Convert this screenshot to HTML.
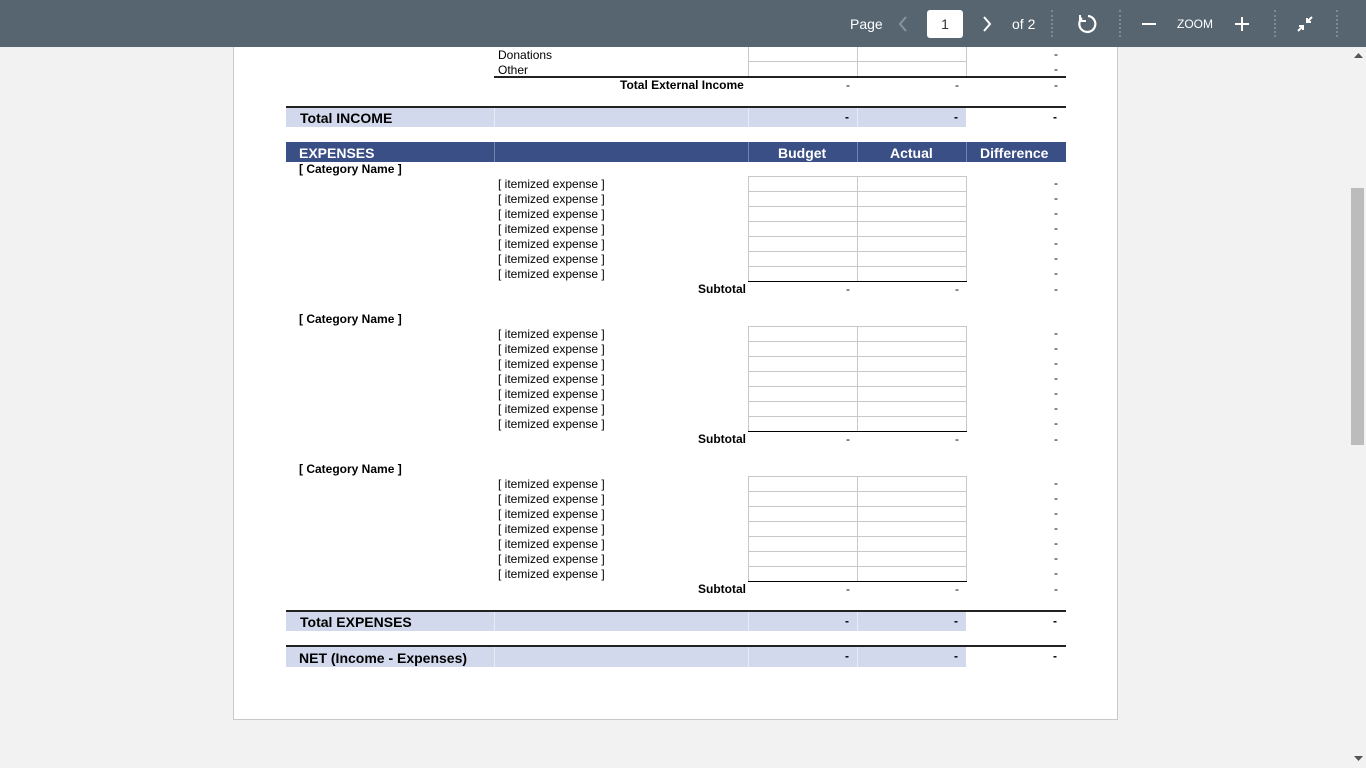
<!DOCTYPE html>
<html><head><meta charset="utf-8"><style>
*{margin:0;padding:0;box-sizing:border-box}
body{width:1366px;height:768px;overflow:hidden;background:#f2f2f2;font-family:"Liberation Sans",Arial,sans-serif;position:relative;color:#000}
.tb{position:absolute;left:0;top:0;width:1366px;height:47px;background:#566570;color:#fff;font-size:14px}
.tb *{position:absolute}
.sep{top:10px;width:0;height:27px;border-left:2px dotted #7d8a94}
.page{position:absolute;left:233px;top:47px;width:885px;height:673px;background:#fff;border:1px solid #c9c9c9;border-top:none}
.t{position:absolute;font-size:12px;line-height:15px;white-space:nowrap;margin-top:1px}
.bx{position:absolute;height:15px;border:1px solid #c8c8c8;border-top:none;border-left:1px solid #c8c8c8}
.bb{font-weight:bold}
.d{position:absolute;left:1054px;font-size:12px;line-height:15px}
.db{position:absolute;font-size:12px;line-height:15px}
.band{position:absolute;left:286px;width:680px;background:#d2d9ec;height:19px}
.ln{position:absolute;height:2px;background:#222}
</style></head><body>
<div class="tb">
<span style="left:850px;top:16px">Page</span>
<svg style="left:896px;top:15px" width="14" height="18"><path d="M10 2L4 9l6 7" stroke="#8593a0" stroke-width="2" fill="none"/></svg>
<div style="left:927px;top:10px;width:36px;height:28px;background:#fff;border-radius:3px;color:#333;text-align:center;line-height:28px">1</div>
<svg style="left:980px;top:15px" width="14" height="18"><path d="M4 2l6 7-6 7" stroke="#fff" stroke-width="2" fill="none"/></svg>
<span style="left:1012px;top:16px">of 2</span>
<div class="sep" style="left:1051px"></div>
<svg style="left:1076px;top:13px" width="22" height="22"><path d="M6 5A8 8 0 1 0 12 3" stroke="#fff" stroke-width="2.2" fill="none"/><path d="M4 2v6h6" stroke="#fff" stroke-width="2" fill="none"/></svg>
<div class="sep" style="left:1119px"></div>
<div style="left:1142px;top:23px;width:14px;height:2px;background:#fff"></div>
<span style="left:1177px;top:17px;font-size:12px">ZOOM</span>
<div style="left:1235px;top:23px;width:14px;height:2px;background:#fff"></div>
<div style="left:1241px;top:17px;width:2px;height:14px;background:#fff"></div>
<div class="sep" style="left:1274px"></div>
<svg style="left:1296px;top:15px" width="18" height="18"><path d="M2 16l5-5M3 11h4v4M16 2l-5 5M11 3v4h4" stroke="#fff" stroke-width="2" fill="none"/></svg>
<div class="sep" style="left:1336px"></div>
</div>
<svg style="position:absolute;left:1354px;top:53px" width="9" height="6"><path d="M0 5L4.5 0 9 5z" fill="#555"/></svg>
<svg style="position:absolute;left:1354px;top:756px" width="9" height="6"><path d="M0 0L4.5 5 9 0z" fill="#555"/></svg>
<div style="position:absolute;left:1351px;top:188px;width:13px;height:257px;background:#bcbcbc"></div>
<div class="page"></div>

<div class="bx" style="left:748px;top:47px;width:110px"></div><div class="bx" style="left:857px;top:47px;width:110px"></div>
<div class="bx" style="left:748px;top:62px;width:110px"></div><div class="bx" style="left:857px;top:62px;width:110px"></div>
<div class="t" style="left:498px;top:47px">Donations</div><span class="d" style="top:47px">-</span>
<div class="t" style="left:498px;top:62px">Other</div><span class="d" style="top:62px">-</span>
<div class="ln" style="left:494px;top:76px;width:572px"></div>
<div class="t bb" style="left:620px;top:77px">Total External Income</div>
<span class="db" style="left:846px;top:78px">-</span><span class="db" style="left:955px;top:78px">-</span><span class="d" style="top:78px">-</span>

<div class="ln" style="left:286px;top:106px;width:780px"></div>
<div class="band" style="top:108px"></div>
<div style="position:absolute;left:494px;top:108px;width:1px;height:19px;background:#e8ecf5"></div>
<div style="position:absolute;left:748px;top:108px;width:1px;height:19px;background:#e8ecf5"></div>
<div style="position:absolute;left:857px;top:108px;width:1px;height:19px;background:#e8ecf5"></div>
<div class="t bb" style="left:300px;top:109px;font-size:14px;line-height:17px">Total INCOME</div>
<span class="db bb" style="left:845px;top:110px">-</span><span class="db bb" style="left:954px;top:110px">-</span><span class="db bb" style="left:1053px;top:110px">-</span>

<div style="position:absolute;left:286px;top:142px;width:780px;height:20px;background:#3b4f87"></div>
<div style="position:absolute;left:494px;top:142px;width:1px;height:20px;background:#7283b0"></div>
<div style="position:absolute;left:748px;top:142px;width:1px;height:20px;background:#7283b0"></div>
<div style="position:absolute;left:857px;top:142px;width:1px;height:20px;background:#7283b0"></div>
<div style="position:absolute;left:966px;top:142px;width:1px;height:20px;background:#7283b0"></div>
<div class="t bb" style="left:299px;top:143px;font-size:14px;line-height:18px;color:#fff">EXPENSES</div>
<div class="t bb" style="left:778px;top:143px;font-size:14px;line-height:18px;color:#fff">Budget</div>
<div class="t bb" style="left:890px;top:143px;font-size:14px;line-height:18px;color:#fff">Actual</div>
<div class="t bb" style="left:980px;top:143px;font-size:14px;line-height:18px;color:#fff">Difference</div>

<div class="t bb" style="left:299px;top:161px">[ Category Name ]</div>
<div class="t" style="left:498px;top:176px">[ itemized expense ]</div>
<div class="t" style="left:498px;top:191px">[ itemized expense ]</div>
<div class="t" style="left:498px;top:206px">[ itemized expense ]</div>
<div class="t" style="left:498px;top:221px">[ itemized expense ]</div>
<div class="t" style="left:498px;top:236px">[ itemized expense ]</div>
<div class="t" style="left:498px;top:251px">[ itemized expense ]</div>
<div class="t" style="left:498px;top:266px">[ itemized expense ]</div>
<div style="position:absolute;left:748px;top:176px;width:219px;height:106px;border:1px solid #c8c8c8;background:repeating-linear-gradient(#fff 0 14px,#c8c8c8 14px 15px)"></div>
<div style="position:absolute;left:857px;top:176px;width:1px;height:106px;background:#c8c8c8"></div>
<div class="ln" style="left:748px;top:281px;width:219px;height:1px;background:#000"></div>
<div class="t bb" style="left:698px;top:281px">Subtotal</div>
<span class="db" style="left:846px;top:282px">-</span><span class="db" style="left:955px;top:282px">-</span>

<div class="t bb" style="left:299px;top:311px">[ Category Name ]</div>
<div class="t" style="left:498px;top:326px">[ itemized expense ]</div>
<div class="t" style="left:498px;top:341px">[ itemized expense ]</div>
<div class="t" style="left:498px;top:356px">[ itemized expense ]</div>
<div class="t" style="left:498px;top:371px">[ itemized expense ]</div>
<div class="t" style="left:498px;top:386px">[ itemized expense ]</div>
<div class="t" style="left:498px;top:401px">[ itemized expense ]</div>
<div class="t" style="left:498px;top:416px">[ itemized expense ]</div>
<div style="position:absolute;left:748px;top:326px;width:219px;height:106px;border:1px solid #c8c8c8;background:repeating-linear-gradient(#fff 0 14px,#c8c8c8 14px 15px)"></div>
<div style="position:absolute;left:857px;top:326px;width:1px;height:106px;background:#c8c8c8"></div>
<div class="ln" style="left:748px;top:431px;width:219px;height:1px;background:#000"></div>
<div class="t bb" style="left:698px;top:431px">Subtotal</div>
<span class="db" style="left:846px;top:432px">-</span><span class="db" style="left:955px;top:432px">-</span>

<div class="t bb" style="left:299px;top:461px">[ Category Name ]</div>
<div class="t" style="left:498px;top:476px">[ itemized expense ]</div>
<div class="t" style="left:498px;top:491px">[ itemized expense ]</div>
<div class="t" style="left:498px;top:506px">[ itemized expense ]</div>
<div class="t" style="left:498px;top:521px">[ itemized expense ]</div>
<div class="t" style="left:498px;top:536px">[ itemized expense ]</div>
<div class="t" style="left:498px;top:551px">[ itemized expense ]</div>
<div class="t" style="left:498px;top:566px">[ itemized expense ]</div>
<div style="position:absolute;left:748px;top:476px;width:219px;height:106px;border:1px solid #c8c8c8;background:repeating-linear-gradient(#fff 0 14px,#c8c8c8 14px 15px)"></div>
<div style="position:absolute;left:857px;top:476px;width:1px;height:106px;background:#c8c8c8"></div>
<div class="ln" style="left:748px;top:581px;width:219px;height:1px;background:#000"></div>
<div class="t bb" style="left:698px;top:581px">Subtotal</div>
<span class="db" style="left:846px;top:582px">-</span><span class="db" style="left:955px;top:582px">-</span>

<span class="d" style="top:176px">-</span><span class="d" style="top:191px">-</span><span class="d" style="top:206px">-</span><span class="d" style="top:221px">-</span><span class="d" style="top:236px">-</span><span class="d" style="top:251px">-</span><span class="d" style="top:266px">-</span><span class="d" style="top:282px">-</span>
<span class="d" style="top:326px">-</span><span class="d" style="top:341px">-</span><span class="d" style="top:356px">-</span><span class="d" style="top:371px">-</span><span class="d" style="top:386px">-</span><span class="d" style="top:401px">-</span><span class="d" style="top:416px">-</span><span class="d" style="top:432px">-</span>
<span class="d" style="top:476px">-</span><span class="d" style="top:491px">-</span><span class="d" style="top:506px">-</span><span class="d" style="top:521px">-</span><span class="d" style="top:536px">-</span><span class="d" style="top:551px">-</span><span class="d" style="top:566px">-</span><span class="d" style="top:582px">-</span>

<div class="ln" style="left:286px;top:610px;width:780px"></div>
<div class="band" style="top:612px"></div>
<div style="position:absolute;left:494px;top:612px;width:1px;height:19px;background:#e8ecf5"></div>
<div style="position:absolute;left:748px;top:612px;width:1px;height:19px;background:#e8ecf5"></div>
<div style="position:absolute;left:857px;top:612px;width:1px;height:19px;background:#e8ecf5"></div>
<div class="t bb" style="left:300px;top:613px;font-size:14px;line-height:17px">Total EXPENSES</div>
<span class="db bb" style="left:845px;top:614px">-</span><span class="db bb" style="left:954px;top:614px">-</span><span class="db bb" style="left:1053px;top:614px">-</span>

<div class="ln" style="left:286px;top:645px;width:780px"></div>
<div class="band" style="top:647px;height:20px"></div>
<div style="position:absolute;left:494px;top:647px;width:1px;height:20px;background:#e8ecf5"></div>
<div style="position:absolute;left:748px;top:647px;width:1px;height:20px;background:#e8ecf5"></div>
<div style="position:absolute;left:857px;top:647px;width:1px;height:20px;background:#e8ecf5"></div>
<div class="t bb" style="left:299px;top:649px;font-size:14px;line-height:17px">NET (Income - Expenses)</div>
<span class="db bb" style="left:845px;top:649px">-</span><span class="db bb" style="left:954px;top:649px">-</span><span class="db bb" style="left:1053px;top:649px">-</span>
</body></html>
